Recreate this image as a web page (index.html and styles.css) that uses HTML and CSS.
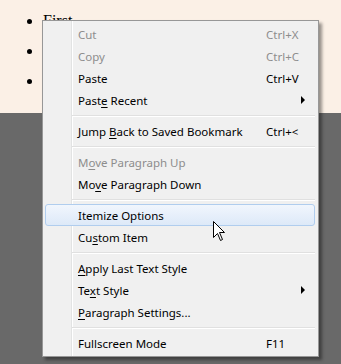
FILE: index.html
```html
<!DOCTYPE html>
<html lang="en">
<head>
  <meta charset="UTF-8">
  <title>Context Menu</title>
  <link rel="stylesheet" href="styles.css">
</head>
<body>

  <div class="doc">
    <ul class="list">
      <li>First</li>
      <li>&nbsp;</li>
      <li>&nbsp;</li>
    </ul>
  </div>
  <div class="desk"></div>

  <!-- context menu, shown over the document -->
  <div class="menu">
    <div class="item disabled"><span class="label">Cut</span><span class="key">Ctrl+X</span></div>
    <div class="item disabled"><span class="label">Copy</span><span class="key">Ctrl+C</span></div>
    <div class="item"><span class="label">Paste</span><span class="key">Ctrl+V</span></div>
    <div class="item"><span class="label">Past<u>e</u> Recent</span><span class="key"><i class="arrow"></i></span></div>
    <div class="sep"></div>
    <div class="item"><span class="label">Jump <u>B</u>ack to Saved Bookmark</span><span class="key">Ctrl+&lt;</span></div>
    <div class="sep"></div>
    <div class="item disabled"><span class="label">M<u>o</u>ve Paragraph Up</span><span class="key"></span></div>
    <div class="item"><span class="label">Mo<u>v</u>e Paragraph Down</span><span class="key"></span></div>
    <div class="sep"></div>
    <div class="item active"><span class="label">Itemize Options</span><span class="key"></span></div>
    <div class="item"><span class="label">Cu<u>s</u>tom Item</span><span class="key"></span></div>
    <div class="sep"></div>
    <div class="item"><span class="label"><u>A</u>pply Last Text Style</span><span class="key"></span></div>
    <div class="item"><span class="label">Te<u>x</u>t Style</span><span class="key"><i class="arrow"></i></span></div>
    <div class="item"><span class="label"><u>P</u>aragraph Settings...</span><span class="key"></span></div>
    <div class="sep"></div>
    <div class="item"><span class="label">Fullscreen Mode</span><span class="key">F11</span></div>
  </div>

  <svg class="cursor" width="13" height="21" viewBox="0 0 13 21">
    <path d="M0.5 0.5 L0.5 16.5 L4.5 12.5 L7.5 19.5 L9.5 18.5 L6.5 11.5 L11.5 11.5 Z" fill="#fff" stroke="#000" stroke-width="1" stroke-linejoin="miter"/>
  </svg>

</body>
</html>
```

FILE: styles.css
```css
* { margin: 0; padding: 0; box-sizing: border-box; }
body {
  font-family: "Liberation Serif", serif;
  background: #696969;
  width: 341px;
  height: 364px;
  overflow: hidden;
  position: relative;
}
.doc {
  height: 113px;
  background: #fbf0e6;
}
.list {
  padding: 6px 0 0 43px;
  font-size: 16px;
  line-height: 30px;
}
.desk { height: 251px; }

/* context menu */
.menu {
  position: absolute;
  left: 42px;
  top: 20px;
  width: 277px;
  padding: 2px 3px 2px 2px;
  border: 1px solid #979797;
  background-color: #f0f0f0;
  background-image: linear-gradient(to right, transparent 28px, #e2e3e3 28px, #e2e3e3 29px, #fff 29px, #fff 30px, transparent 30px);
  box-shadow: 3px 3px 3px rgba(0,0,0,0.4);
  font-family: "Noto Sans", sans-serif;
  font-size: 11.5px;
  color: #000;
}
.item {
  display: flex;
  align-items: center;
  height: 22px;
  padding-left: 32px;
  border: 1px solid transparent;
  border-radius: 3px;
}
.item u { text-decoration: underline; text-underline-offset: 2px; }
.item .label { flex: 1; white-space: nowrap; }
.item .key { width: 48px; white-space: nowrap; }
.item.disabled { color: #8d8d8d; }
.item.active {
  border-color: #b0cdee;
  background: linear-gradient(#f1f6fd, #dde9f8);
}
.arrow {
  display: block;
  margin-left: 35px;
  width: 0;
  height: 0;
  border-top: 4px solid transparent;
  border-bottom: 4px solid transparent;
  border-left: 4px solid #000;
}
.sep {
  height: 9px;
  margin-left: 27px;
  padding-top: 4px;
}
.sep::before {
  content: '';
  display: block;
  height: 1px;
  background: #e0e0e0;
  border-bottom: 1px solid #fff;
  box-sizing: content-box;
}

.cursor {
  position: absolute;
  left: 213px;
  top: 221px;
}
```
